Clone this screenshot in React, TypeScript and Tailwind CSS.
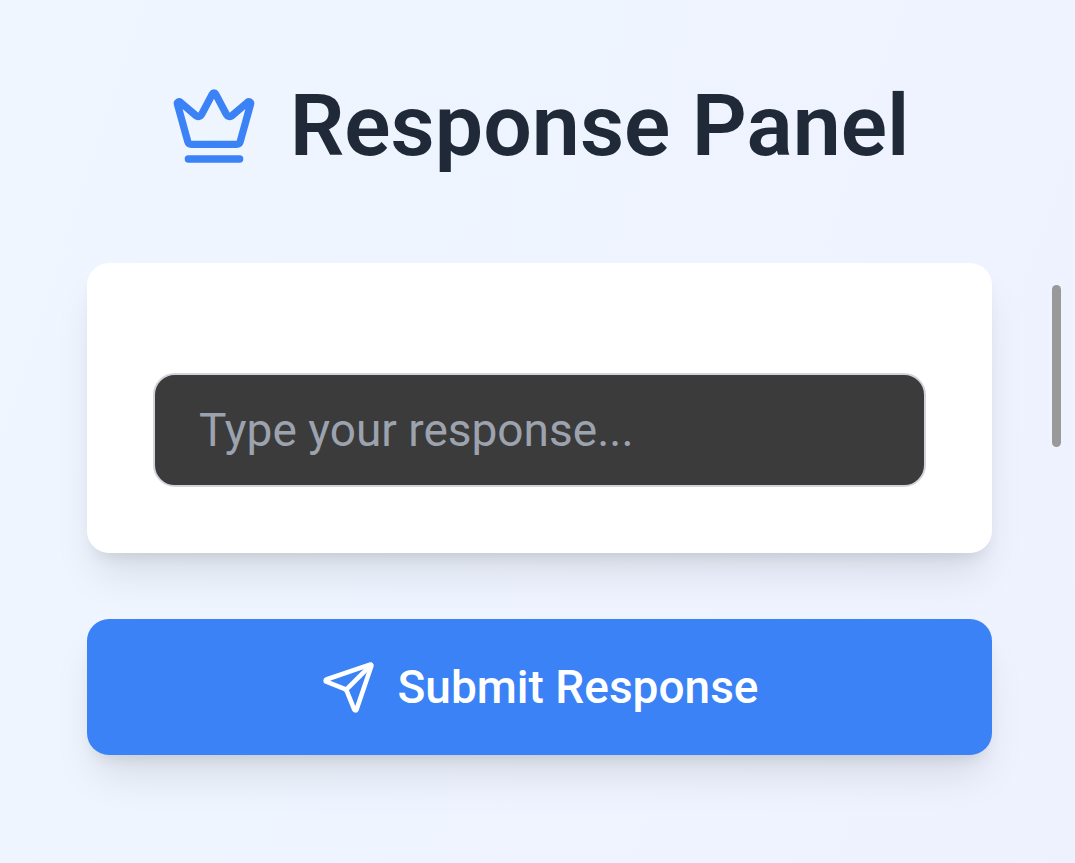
import { useState } from "react";
import { Crown, Send } from "lucide-react";

const shadow =
  "shadow-[0_27px_41px_-8px_rgba(0,0,0,0.1),0_11px_16px_-8px_rgba(0,0,0,0.1)]";

const App = () => {
  const [response, setResponse] = useState("");

  return (
    <div className="min-h-screen bg-[linear-gradient(108deg,#eff6ff,#eef2ff)] pt-[66px] pr-[83px] pb-[66px] pl-[87px] font-['Roboto','Liberation_Sans',sans-serif]">
      <header className="mb-[77px] flex items-center justify-center gap-8">
        <Crown className="size-[88px] shrink-0 text-[#3b82f6]" />
        <h1 className="text-[86px] leading-[120px] font-semibold whitespace-nowrap text-[#1f2937]">
          Response Panel
        </h1>
      </header>
      <form
        className="flex flex-col gap-[66px]"
        onSubmit={(e) => e.preventDefault()}
      >
        <div
          className={`rounded-[22px] bg-white px-[66px] pt-[110px] pb-[66px] ${shadow}`}
        >
          <input
            className="block h-[114px] w-full rounded-[22px] border-2 border-[#d1d5db] bg-[#3b3b3b] px-11 text-[46px] text-white placeholder:text-[#9ca3af]"
            type="text"
            aria-label="Response"
            placeholder="Type your response..."
            value={response}
            onChange={(e) => setResponse(e.target.value)}
          />
        </div>
        <button
          className={`flex h-[136px] w-full items-center justify-center gap-[22px] rounded-[22px] bg-[#3b82f6] text-[46px] font-medium text-white ${shadow}`}
          type="submit"
        >
          <Send className="size-[55px] shrink-0" />
          Submit Response
        </button>
      </form>
      {/* floating scroll thumb */}
      <div className="fixed top-[285px] right-[14px] h-[162px] w-[9px] rounded-full bg-[#999999]" />
    </div>
  );
};

export default App;
